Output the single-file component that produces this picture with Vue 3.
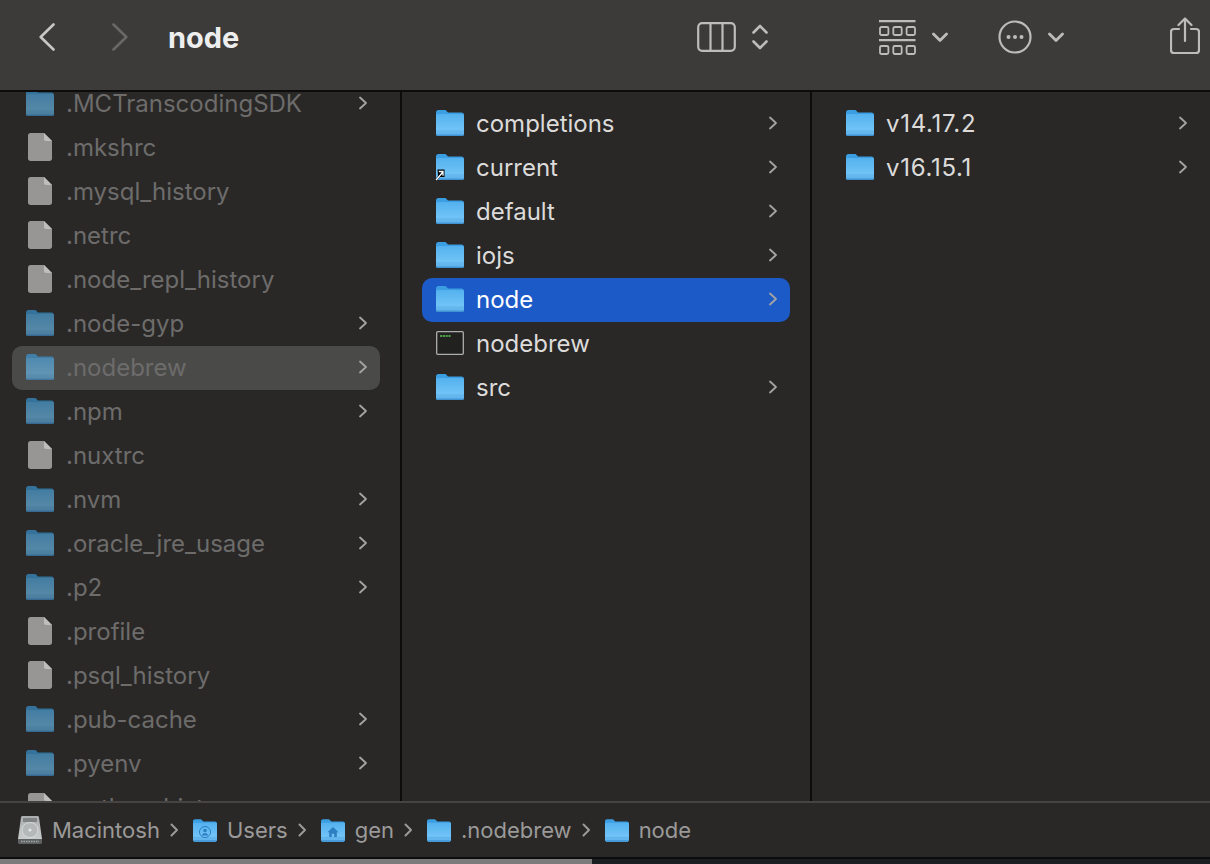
<script setup>
const col1 = [
  { name: '.MCTranscodingSDK', dir: true },
  { name: '.mkshrc' },
  { name: '.mysql_history' },
  { name: '.netrc' },
  { name: '.node_repl_history' },
  { name: '.node-gyp', dir: true },
  { name: '.nodebrew', dir: true, active: true },
  { name: '.npm', dir: true },
  { name: '.nuxtrc' },
  { name: '.nvm', dir: true },
  { name: '.oracle_jre_usage', dir: true },
  { name: '.p2', dir: true },
  { name: '.profile' },
  { name: '.psql_history' },
  { name: '.pub-cache', dir: true },
  { name: '.pyenv', dir: true },
  { name: '.python_history' }
]

const col2 = [
  { name: 'completions', dir: true },
  { name: 'current', dir: true, alias: true },
  { name: 'default', dir: true },
  { name: 'iojs', dir: true },
  { name: 'node', dir: true, selected: true },
  { name: 'nodebrew', exec: true },
  { name: 'src', dir: true }
]

const col3 = ['v14.17.2', 'v16.15.1']

const crumbs = [
  { name: '.nodebrew' },
  { name: 'node' }
]
</script>

<template>
  <div class="finder">
    <svg class="defs" width="0" height="0">
      <defs>
        <linearGradient id="fbody" x1="0" y1="0" x2="0" y2="1">
          <stop offset="0" stop-color="#54b1ee" />
          <stop offset="1" stop-color="#7ccbfa" />
        </linearGradient>
        <linearGradient id="disk" x1="0" y1="0" x2="0" y2="1">
          <stop offset="0" stop-color="#a9adae" />
          <stop offset="1" stop-color="#c9cccc" />
        </linearGradient>
        <symbol id="folder" viewBox="0 0 28 26">
          <path d="M0 2.500C0 1 1 0 2.400 0h6.200c1 0 1.500.4 2.200 1.200L12 2.600h13.500C27 2.600 28 3.600 28 5v6H0z" fill="#3c9ee2" />
          <path d="M0 5.500C0 4.600.8 4 1.800 4h24.400C27.200 4 28 4.600 28 5.500V23.500C28 25 27 26 25.500 26h-23C1 26 0 25 0 23.500z" fill="url(#fbody)" />
          <path d="M0 20.500h28v1H0z" fill="#5aaee6" />
          <path d="M0 21.500h28v2c0 1.500-1 2.500-2.500 2.500h-23C1 26 0 25 0 23.500z" fill="#62b6ed" />
          <path d="M0 24.500h28c-.2 1-1.200 1.500-2.500 1.500h-23C1.200 26 .2 25.500 0 24.500z" fill="#3f93d3" />
        </symbol>
      </defs>
    </svg>

    <header class="toolbar">
      <svg class="nav" width="16" height="28" viewBox="0 0 16 28" fill="none" stroke="#c8c7c6" stroke-width="2.600" stroke-linecap="round" stroke-linejoin="round">
        <path d="M14.500 1.500 1.700 14l12.800 12.500" />
      </svg>
      <svg class="nav forward" width="16" height="28" viewBox="0 0 16 28" fill="none" stroke="#696867" stroke-width="2.600" stroke-linecap="round" stroke-linejoin="round">
        <path d="M1.500 1.500 14.300 14 1.500 26.500" />
      </svg>
      <h1 class="title">node</h1>
      <div class="spacer"></div>

      <svg width="39" height="30" viewBox="0 0 39 30" fill="none" stroke="#bdbcbb" stroke-width="2.200">
        <rect x="1.200" y="1.200" width="36.600" height="27.600" rx="4" />
        <path d="M13.500 1.200v27.600M25.500 1.200v27.600" />
      </svg>
      <svg class="updown" width="16" height="28" viewBox="0 0 16 28" fill="none" stroke="#bdbcbb" stroke-width="2.600" stroke-linecap="round" stroke-linejoin="round">
        <path d="M1.500 9.500 8 3l6.500 6.500M1.500 18.500 8 25l6.500-6.500" />
      </svg>

      <svg class="group" width="37" height="35" viewBox="0 0 37 35" fill="none" stroke="#bdbcbb" stroke-width="1.800">
        <path d="M0 1.200h36.500M0 20.200h36.500" stroke-width="2.200" />
        <rect x="1" y="7" width="8.400" height="8" rx="1.500" />
        <rect x="14.300" y="7" width="8.400" height="8" rx="1.500" />
        <rect x="27.600" y="7" width="8.400" height="8" rx="1.500" />
        <rect x="1" y="26" width="8.400" height="8" rx="1.500" />
        <rect x="14.300" y="26" width="8.400" height="8" rx="1.500" />
        <rect x="27.600" y="26" width="8.400" height="8" rx="1.500" />
      </svg>
      <svg class="caret" width="16" height="11" viewBox="0 0 16 11" fill="none" stroke="#bdbcbb" stroke-width="2.800" stroke-linecap="round" stroke-linejoin="round">
        <path d="M1.500 2 8 8.500 14.500 2" />
      </svg>

      <svg class="more" width="34" height="34" viewBox="0 0 34 34" fill="none" stroke="#bdbcbb" stroke-width="2.200">
        <circle cx="17" cy="17" r="15.500" />
        <g fill="#bdbcbb" stroke="none">
          <circle cx="10.500" cy="17" r="2" />
          <circle cx="17" cy="17" r="2" />
          <circle cx="23.500" cy="17" r="2" />
        </g>
      </svg>
      <svg class="caret" width="16" height="11" viewBox="0 0 16 11" fill="none" stroke="#bdbcbb" stroke-width="2.800" stroke-linecap="round" stroke-linejoin="round">
        <path d="M1.500 2 8 8.500 14.500 2" />
      </svg>

      <svg class="share" width="30" height="38" viewBox="0 0 30 38" fill="none" stroke="#bdbcbb" stroke-width="2.200" stroke-linecap="round" stroke-linejoin="round">
        <path d="M9 12H4c-1.700 0-3 1.300-3 3v18c0 1.700 1.300 3 3 3h22c1.700 0 3-1.300 3-3V15c0-1.700-1.300-3-3-3h-5" />
        <path d="M15 24V1.500M8.500 8 15 1.500 21.500 8" />
      </svg>
    </header>

    <main class="columns">
      <section class="column first">
        <div class="list scrolled">
          <div v-for="item in col1" :key="item.name" class="row dim" :class="{ active: item.active }">
            <svg v-if="item.dir" class="icon folder-dim" width="28" height="26"><use href="#folder" /></svg>
            <svg v-else class="icon file" width="28" height="28" viewBox="0 0 28 28">
              <path d="M2 2.500C2 1 3 0 4.500 0H18l8 8v17.500c0 1.500-1 2.500-2.500 2.500h-19C3 28 2 27 2 25.500z" fill="#979695" />
              <path d="M18 0l8 8h-6c-1.200 0-2-.8-2-2z" fill="#bfbebd" />
            </svg>
            <span class="name">{{ item.name }}</span>
            <svg v-if="item.dir" class="chev" width="10" height="14" viewBox="0 0 10 14" fill="none" stroke="#a5a4a3" stroke-width="1.800" stroke-linecap="round" stroke-linejoin="round">
              <path d="M2 1.500 8 7l-6 5.500" />
            </svg>
          </div>
        </div>
      </section>

      <section class="column second">
        <div class="list">
          <div v-for="item in col2" :key="item.name" class="row" :class="{ selected: item.selected }">
            <span class="icon-wrap">
              <svg v-if="item.dir" class="icon" width="28" height="26"><use href="#folder" /></svg>
              <svg v-else class="icon" width="28" height="24" viewBox="0 0 28 24">
                <rect x=".7" y=".7" width="26.600" height="22.600" rx="1" fill="#212220" stroke="#aeaeae" stroke-width="1.300" />
                <path d="M4 5h11" stroke="#4f9a48" stroke-width="2.200" stroke-dasharray="2.200 .6" />
              </svg>
              <svg v-if="item.alias" class="alias" width="10" height="12" viewBox="0 0 10 12">
                <path d="M2.500 .5h7v7.500H5L1.500 11.500H.5V10L3 7z" fill="#000" />
                <path d="M1 11 7.500 3.500M3.800 2.500h4.200v4.200" fill="none" stroke="#fff" stroke-width="1.300" />
              </svg>
            </span>
            <span class="name">{{ item.name }}</span>
            <svg v-if="item.dir" class="chev" width="10" height="14" viewBox="0 0 10 14" fill="none" stroke="#a5a4a3" stroke-width="1.800" stroke-linecap="round" stroke-linejoin="round">
              <path d="M2 1.500 8 7l-6 5.500" />
            </svg>
          </div>
        </div>
      </section>

      <section class="column third">
        <div class="list">
          <div v-for="name in col3" :key="name" class="row">
            <svg class="icon" width="28" height="26"><use href="#folder" /></svg>
            <span class="name version">{{ name }}</span>
            <svg class="chev" width="10" height="14" viewBox="0 0 10 14" fill="none" stroke="#a5a4a3" stroke-width="1.800" stroke-linecap="round" stroke-linejoin="round">
              <path d="M2 1.500 8 7l-6 5.500" />
            </svg>
          </div>
        </div>
      </section>
    </main>

    <footer class="pathbar">
      <svg class="crumb-icon" width="24" height="28" viewBox="0 0 24 28">
        <path d="M3 1.500C3 .7 3.700 0 4.500 0h15c.8 0 1.500.7 1.500 1.500L24 23H0z" fill="url(#disk)" />
        <rect x="5" y="2" width="14" height="4" rx=".5" fill="#7f8383" />
        <ellipse cx="12" cy="14" rx="8" ry="7.500" fill="#b4b8b8" stroke="#dfe0e0" stroke-width=".8" />
        <circle cx="12" cy="14" r="1.600" fill="#e4e5e5" />
        <path d="M0 23h24v3.500c0 .8-.7 1.500-1.500 1.500h-21C.7 28 0 27.300 0 26.500z" fill="#5f6262" />
        <path d="M3 25.500h18" stroke="#a4a7a7" stroke-width="1.600" stroke-dasharray="1.500 1" />
      </svg>
      <span class="crumb">Macintosh</span>
      <svg class="sep" width="9" height="14" viewBox="0 0 9 14" fill="none" stroke="#9b9a99" stroke-width="2" stroke-linecap="round" stroke-linejoin="round"><path d="M1.500 1.500 7 7l-5.500 5.500" /></svg>

      <span class="crumb-folder">
        <svg width="24" height="23"><use href="#folder" /></svg>
        <svg class="badge" width="12" height="12" viewBox="0 0 12 12" fill="#2c7fc0">
          <circle cx="6" cy="6" r="5.500" fill="none" stroke="#2c7fc0" stroke-width="1" />
          <circle cx="6" cy="4.500" r="1.800" />
          <path d="M2.800 9.500c.6-1.800 1.800-2.500 3.200-2.500s2.600.7 3.200 2.500z" />
        </svg>
      </span>
      <span class="crumb">Users</span>
      <svg class="sep" width="9" height="14" viewBox="0 0 9 14" fill="none" stroke="#9b9a99" stroke-width="2" stroke-linecap="round" stroke-linejoin="round"><path d="M1.500 1.500 7 7l-5.500 5.500" /></svg>

      <span class="crumb-folder">
        <svg width="24" height="23"><use href="#folder" /></svg>
        <svg class="badge" width="12" height="12" viewBox="0 0 12 12" fill="#2c7fc0">
          <path d="M6 1 .5 6.200h1.700V11h2.600V7.800h2.400V11h2.600V6.200h1.700z" />
        </svg>
      </span>
      <span class="crumb">gen</span>
      <svg class="sep" width="9" height="14" viewBox="0 0 9 14" fill="none" stroke="#9b9a99" stroke-width="2" stroke-linecap="round" stroke-linejoin="round"><path d="M1.500 1.500 7 7l-5.500 5.500" /></svg>

      <template v-for="(c, i) in crumbs" :key="c.name">
        <svg class="plain-folder" width="24" height="23"><use href="#folder" /></svg>
        <span class="crumb">{{ c.name }}</span>
        <svg v-if="i < crumbs.length - 1" class="sep" width="9" height="14" viewBox="0 0 9 14" fill="none" stroke="#9b9a99" stroke-width="2" stroke-linecap="round" stroke-linejoin="round"><path d="M1.500 1.500 7 7l-5.500 5.500" /></svg>
      </template>
    </footer>

    <div class="hscroll"><div class="thumb"></div></div>
  </div>
</template>

<style>
html, body {
  margin: 0;
  background: #292827;
}
</style>

<style scoped>
.finder {
  width: 1210px;
  height: 864px;
  display: flex;
  flex-direction: column;
  overflow: hidden;
  background: #292827;
  font-family: Inter, "Liberation Sans", sans-serif;
  font-size: 24px;
}

.defs {
  position: absolute;
}

.toolbar {
  flex: none;
  box-sizing: border-box;
  height: 92px;
  padding: 0 10px 16px 39px;
  display: flex;
  align-items: center;
  background: #3c3b3a;
  border-bottom: 2px solid #0c0c0c;
}

.forward {
  margin-left: 57px;
}

.title {
  margin: 0 0 0 40px;
  font-size: 29px;
  font-weight: 700;
  color: #eeeeee;
}

.spacer {
  flex: 1;
}

.updown {
  margin-left: 16px;
}

.group {
  margin-left: 111px;
}

.caret {
  margin-left: 16px;
}

.more {
  margin-left: 50px;
}

.share {
  margin-left: 106px;
  margin-bottom: 2px;
}

.columns {
  flex: 1;
  min-height: 0;
  display: grid;
  grid-template-columns: 402px 410px 398px;
}

.column {
  overflow: hidden;
  border-right: 2px solid #0c0c0c;
}

.third {
  border-right: none;
}

.list {
  padding-top: 10px;
}

.scrolled {
  padding-top: 0;
  margin-top: -10px;
}

.row {
  box-sizing: border-box;
  height: 44px;
  margin-right: 20px;
  margin-left: 20px;
  padding: 0 12px 2px 14px;
  display: flex;
  align-items: center;
  border-radius: 10px;
  color: #dcdbda;
}

.first .row {
  margin-left: 12px;
}

.third .row {
  margin-left: 20px;
  margin-right: 10px;
}

.row.dim {
  color: #6d6c6b;
}

.row.active {
  background: #4a4a49;
}

.row.selected {
  background: #1c5ac8;
  color: #ffffff;
}

.icon-wrap {
  position: relative;
  width: 28px;
  height: 26px;
  display: flex;
  align-items: center;
  flex: none;
}

.icon {
  flex: none;
  display: block;
}

.folder-dim {
  opacity: 0.62;
}

.alias {
  position: absolute;
  left: -1px;
  bottom: -1px;
}

.name {
  margin-left: 12px;
  flex: 1;
  white-space: nowrap;
}

.version {
  letter-spacing: 0.7px;
}

.chev {
  flex: none;
}

.pathbar {
  flex: none;
  box-sizing: border-box;
  height: 56px;
  padding: 0 0 0 18px;
  display: flex;
  align-items: center;
  background: #292827;
  border-top: 2px solid #454443;
  color: #9b9a99;
  font-size: 22px;
}

.crumb {
  margin-left: 10px;
  white-space: nowrap;
}

.sep {
  margin: 0 14px 0 10px;
  flex: none;
}

.crumb-folder {
  position: relative;
  width: 24px;
  height: 23px;
  flex: none;
}

.badge {
  position: absolute;
  left: 6px;
  top: 7px;
}

.hscroll {
  flex: none;
  box-sizing: border-box;
  height: 7px;
  background: #1a1e21;
  border-top: 2px solid #0c0c0c;
}

.thumb {
  width: 592px;
  height: 5px;
  background: #7b7b7b;
}
</style>
